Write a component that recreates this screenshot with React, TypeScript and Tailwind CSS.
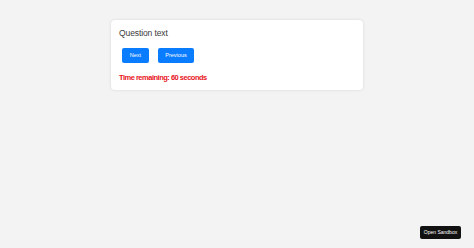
import React from 'react';

export default function App() {
  return (
    <div
      className="relative min-h-screen w-full bg-[#f3f3f3] pt-[20px]"
      style={{ fontFamily: '"Liberation Sans", Arial, sans-serif' }}
    >
      {/* Quiz card */}
      <div className="mx-auto flex h-[70px] w-[252px] flex-col rounded-[4px] bg-white px-[8px] pt-[7px] shadow-[0_0_3px_rgba(0,0,0,0.12)]">
        <h2 className="text-[8.5px] leading-[12px] tracking-[-0.1px] text-[#3a3a3a]">Question text</h2>

        <div className="ml-[3px] mt-[9px] flex gap-[9px]">
          <button className="h-[15px] w-[27px] rounded-[2px] bg-[#0a7cff] text-[5.5px] text-white">
            Next
          </button>
          <button className="h-[15px] w-[36px] rounded-[2px] bg-[#0a7cff] text-[5.5px] text-white">
            Previous
          </button>
        </div>

        <p className="mt-[10px] text-[7.5px] font-bold leading-[10px] tracking-[-0.5px] text-[#e8141c]">
          Time remaining: 60 seconds
        </p>
      </div>

      {/* Sandbox badge */}
      <button className="absolute bottom-[9px] right-[13px] h-[13px] w-[41px] rounded-[2px] bg-[#111] text-[5px] text-white">
        Open Sandbox
      </button>
    </div>
  );
}
